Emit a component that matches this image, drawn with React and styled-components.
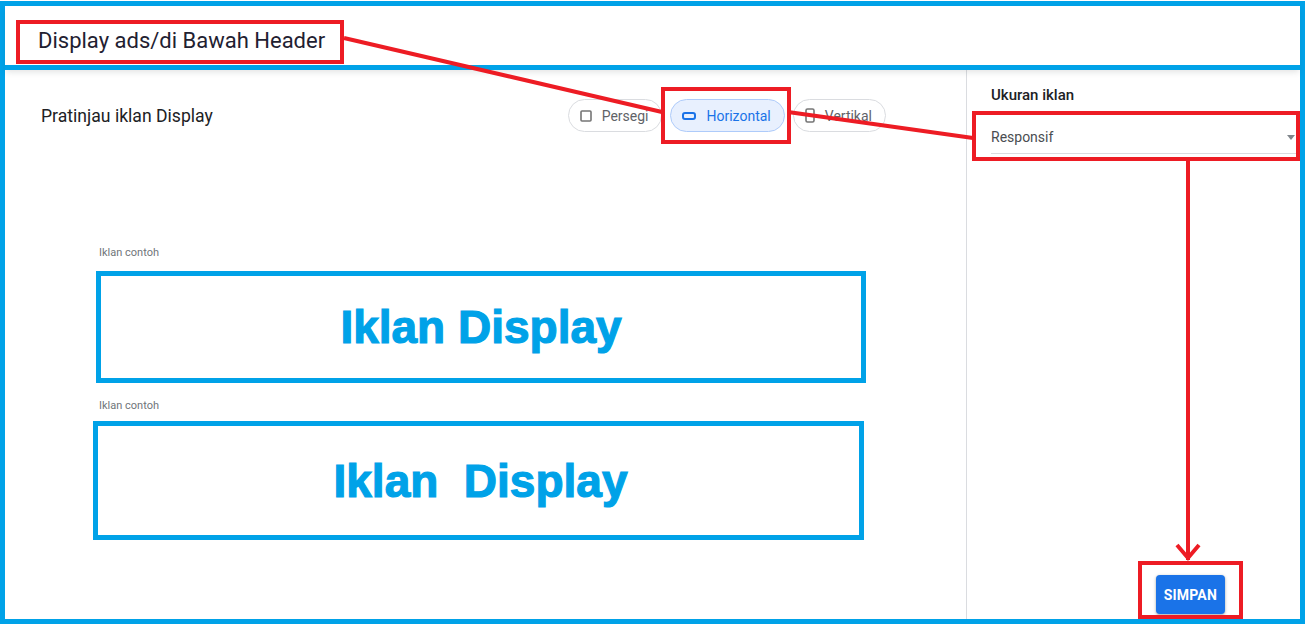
import styled, { createGlobalStyle } from 'styled-components'

const RED = '#ed1c24'
const BLUE = '#00a2e8'

const GlobalStyle = createGlobalStyle`
  html, body {
    margin: 0;
    padding: 0;
    background: #fff;
  }
  body {
    font-family: Roboto, "Liberation Sans", Arial, sans-serif;
    color: #202124;
  }
  * {
    box-sizing: border-box;
  }
`

const Page = styled.div`
  position: relative;
  width: 1305px;
  height: 625px;
  padding-top: 1px;
`

const Frame = styled.div`
  height: 623px;
  border: 5px solid ${BLUE};
  display: flex;
  flex-direction: column;
`

const Header = styled.header`
  position: relative;
  z-index: 1;
  flex-shrink: 0;
  height: 64px;
  padding: 14px 0 0 11px;
  border-bottom: 5px solid ${BLUE};
  box-shadow: 0 3px 6px -1px rgba(60, 64, 67, 0.15);
`

const HeaderTitle = styled.h1`
  margin: 0;
  width: 328px;
  height: 44px;
  padding: 0 0 3px 18px;
  display: flex;
  align-items: center;
  border: 4px solid ${RED};
  font-size: 22px;
  font-weight: 400;
  color: #1f2131;
  white-space: nowrap;
`

const Body = styled.div`
  flex: 1;
  min-height: 0;
  display: flex;
`

const Main = styled.main`
  width: 962px;
  flex-shrink: 0;
  padding: 29px 80px 0 36px;
  border-right: 1px solid #dadce0;
  display: flex;
  flex-direction: column;
`

const TopRow = styled.div`
  height: 33px;
  display: flex;
  align-items: center;
  justify-content: space-between;
`

const PreviewTitle = styled.h2`
  margin: 0;
  font-size: 17.6px;
  font-weight: 400;
  color: #202124;
`

const Chips = styled.div`
  display: flex;
  align-items: center;
  gap: 8px;
`

const Chip = styled.button`
  height: 33px;
  padding: 0 13px 0 11px;
  display: inline-flex;
  align-items: center;
  gap: 10px;
  border-radius: 17px;
  border: 1px solid ${p => (p.$active ? '#aecbfa' : '#dadce0')};
  background: ${p => (p.$active ? '#e8f0fe' : '#fff')};
  color: ${p => (p.$active ? '#1a73e8' : '#5f6368')};
  font-family: Roboto, "Liberation Sans", Arial, sans-serif;
  font-size: 14px;
  cursor: pointer;
`

// red annotation frame drawn over an element
const Marked = styled.span`
  position: relative;
  display: ${p => (p.$block ? 'flow-root' : 'inline-flex')};
  margin-top: ${p => p.$mt || 0}px;
  &::after {
    content: '';
    position: absolute;
    top: ${p => -p.$t}px;
    right: ${p => -p.$r}px;
    bottom: ${p => -p.$b}px;
    left: ${p => -p.$l}px;
    border: 4px solid ${RED};
    pointer-events: none;
    z-index: 2;
  }
`

const Preview = styled.section`
  margin: 114px 0 0 52px;
  display: flex;
  flex-direction: column;
  align-items: flex-start;
`

const AdLabel = styled.div`
  margin: ${p => p.$top}px 0 ${p => p.$bottom}px 6px;
  font-size: 11px;
  line-height: 14px;
  color: #70757a;
`

const AdBox = styled.div`
  width: ${p => p.$w}px;
  height: ${p => p.$h}px;
  margin-left: ${p => p.$shift || 0}px;
  border: 5px solid ${BLUE};
  display: flex;
  align-items: center;
  justify-content: center;
`

const AdText = styled.span`
  font-family: "Liberation Sans", Arial, sans-serif;
  font-weight: 700;
  font-size: 46px;
  color: ${BLUE};
  -webkit-text-stroke: 1.2px ${BLUE};
  white-space: pre;
  margin-left: ${p => p.$nudge || 0}px;
`

const Side = styled.aside`
  flex: 1;
  padding: 15px 4px 5px 24px;
  display: flex;
  flex-direction: column;
`

const SideTitle = styled.div`
  font-size: 15px;
  line-height: 20px;
  font-weight: 500;
  color: #202124;
`

const Select = styled.div`
  height: 36px;
  padding-top: 3px;
  display: flex;
  align-items: center;
  justify-content: space-between;
  border-bottom: 1px solid #dadce0;
  font-size: 14px;
  color: #4a4d51;
`

const Caret = styled.span`
  margin-right: 1px;
  width: 0;
  height: 0;
  border-left: 4.5px solid transparent;
  border-right: 4.5px solid transparent;
  border-top: 5px solid #80868b;
`

const Footer = styled.div`
  margin-top: auto;
  padding-right: 71px;
  display: flex;
  justify-content: flex-end;
`

const SaveButton = styled.button`
  height: 39px;
  padding: 0 8px;
  border: none;
  border-radius: 4px;
  background: #1a73e8;
  color: #fff;
  font-family: Roboto, "Liberation Sans", Arial, sans-serif;
  font-size: 14px;
  font-weight: 700;
  letter-spacing: 0.2px;
  box-shadow: 0 1px 2px rgba(60, 64, 67, 0.3), 0 1px 3px 1px rgba(60, 64, 67, 0.15);
  cursor: pointer;
`

const Arrows = styled.svg`
  position: absolute;
  top: 0;
  left: 0;
  z-index: 3;
  pointer-events: none;
`

const SquareIcon = () => (
  <svg width="12" height="12" viewBox="0 0 12 12">
    <rect x="1" y="1" width="10" height="10" rx="1" fill="none" stroke="#757575" strokeWidth="1.6" />
  </svg>
)

const WideIcon = () => (
  <svg width="14" height="8" viewBox="0 0 14 8">
    <rect x="1" y="1" width="12" height="6" rx="2" fill="none" stroke="#1a73e8" strokeWidth="2" />
  </svg>
)

const TallIcon = () => (
  <svg width="10" height="15" viewBox="0 0 10 15">
    <rect x="1" y="1" width="8" height="13" rx="1.5" fill="none" stroke="#757575" strokeWidth="1.6" />
  </svg>
)

export default function App() {
  return (
    <>
      <GlobalStyle />
      <Page>
        <Frame>
          <Header>
            <HeaderTitle>Display ads/di Bawah Header</HeaderTitle>
          </Header>
          <Body>
            <Main>
              <TopRow>
                <PreviewTitle>Pratinjau iklan Display</PreviewTitle>
                <Chips>
                  <Chip>
                    <SquareIcon />
                    Persegi
                  </Chip>
                  <Marked $t={12} $r={6} $b={12} $l={9}>
                    <Chip $active>
                      <WideIcon />
                      Horizontal
                    </Chip>
                  </Marked>
                  <Chip>
                    <TallIcon />
                    Vertikal
                  </Chip>
                </Chips>
              </TopRow>
              <Preview>
                <AdLabel $top={0} $bottom={11}>Iklan contoh</AdLabel>
                <AdBox $w={770} $h={112} $shift={3}>
                  <AdText>Iklan Display</AdText>
                </AdBox>
                <AdLabel $top={16} $bottom={8}>Iklan contoh</AdLabel>
                <AdBox $w={771} $h={119}>
                  <AdText $nudge={4}>{'Iklan  Display'}</AdText>
                </AdBox>
              </Preview>
            </Main>
            <Side>
              <SideTitle>Ukuran iklan</SideTitle>
              <Marked $block $mt={13} $t={7} $r={4} $b={7} $l={19}>
                <Select>
                  <span>Responsif</span>
                  <Caret />
                </Select>
              </Marked>
              <Footer>
                <Marked $t={14} $r={18} $b={5} $l={18}>
                  <SaveButton>SIMPAN</SaveButton>
                </Marked>
              </Footer>
            </Side>
          </Body>
        </Frame>
        <Arrows width="1305" height="625" viewBox="0 0 1305 625">
          <g stroke={RED} strokeWidth="4" fill="none" strokeLinecap="butt">
            <line x1="344" y1="38" x2="662" y2="112" />
            <line x1="788" y1="112" x2="973" y2="138" />
            <line x1="1188" y1="160" x2="1188" y2="560" />
            <polyline points="1177,545 1188,558 1199,545" strokeLinejoin="miter" />
          </g>
        </Arrows>
      </Page>
    </>
  )
}
